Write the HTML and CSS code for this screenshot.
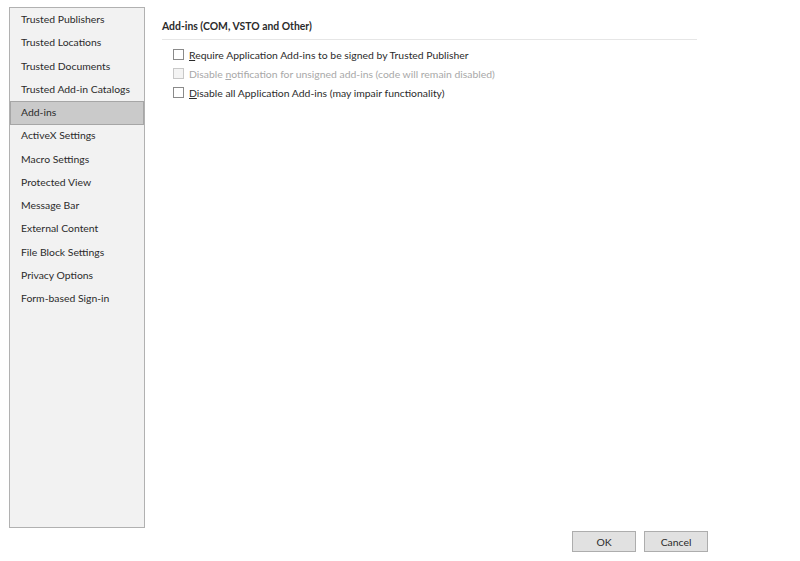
FILE: index.html
```html
<!DOCTYPE html>
<html>
<head>
<meta charset="utf-8">
<link rel="stylesheet" href="styles.css">
</head>
<body>
<div class="dialog">
  <div class="body">
    <ul class="nav">
      <li class="nav-item">Trusted Publishers</li>
      <li class="nav-item">Trusted Locations</li>
      <li class="nav-item">Trusted Documents</li>
      <li class="nav-item">Trusted Add-in Catalogs</li>
      <li class="nav-item selected">Add-ins</li>
      <li class="nav-item">ActiveX Settings</li>
      <li class="nav-item">Macro Settings</li>
      <li class="nav-item">Protected View</li>
      <li class="nav-item">Message Bar</li>
      <li class="nav-item">External Content</li>
      <li class="nav-item">File Block Settings</li>
      <li class="nav-item">Privacy Options</li>
      <li class="nav-item">Form-based Sign-in</li>
    </ul>
    <div class="content">
      <div class="section-title">Add-ins (COM, VSTO and Other)</div>
      <div class="separator"></div>
      <div class="options">
        <label class="option"><span class="box"></span><span><u>R</u>equire Application Add-ins to be signed by Trusted Publisher</span></label>
        <label class="option disabled"><span class="box"></span><span>Disable <u>n</u>otification for unsigned add-ins (code will remain disabled)</span></label>
        <label class="option"><span class="box"></span><span><u>D</u>isable all Application Add-ins (may impair functionality)</span></label>
      </div>
    </div>
  </div>
  <div class="footer">
    <button class="btn">OK</button>
    <button class="btn">Cancel</button>
  </div>
</div>
</body>
</html>
```

FILE: styles.css
```css
html, body {
  margin: 0;
  padding: 0;
  background: #ffffff;
}
body {
  font-family: "Lato", "Open Sans", sans-serif;
  font-size: 10.4px;
  color: #2b2b2b;
}
.dialog {
  display: flex;
  flex-direction: column;
  width: 800px;
  height: 561px;
}
.body {
  display: flex;
  margin-top: 7px;
  height: 521px;
}
.nav {
  list-style: none;
  margin: 0 0 0 9px;
  padding: 0;
  width: 134px;
  background: #f2f2f2;
  border: 1px solid #b1b1b1;
  box-sizing: content-box;
  height: 519px;
}
.nav-item {
  height: 23.25px;
  line-height: 23px;
  padding-left: 11px;
  box-sizing: border-box;
  white-space: nowrap;
}
.nav-item.selected {
  background: #cacaca;
  border: 1px solid #a6a6a6;
  padding-left: 10px;
  line-height: 21px;
  height: 24px;
  margin-bottom: -0.75px;
}
.content {
  display: flex;
  flex-direction: column;
  margin-left: 17px;
  width: 535px;
}
.section-title {
  font-weight: bold;
  margin-top: 11px;
  height: 18px;
  line-height: 16px;
}
.separator {
  height: 1px;
  background: #e6e6e6;
  margin-top: 3px;
}
.options {
  display: flex;
  flex-direction: column;
  margin-top: 5px;
  padding-left: 11px;
}
.option {
  display: flex;
  align-items: center;
  gap: 5px;
  height: 19px;
  white-space: nowrap;
}
.option u {
  text-decoration: underline;
  text-underline-offset: 1px;
}
.box {
  width: 11px;
  height: 11px;
  border: 1px solid #8a8a8a;
  background: #ffffff;
  box-sizing: border-box;
  flex: none;
}
.option.disabled {
  color: #a8a8a8;
}
.option.disabled .box {
  border-color: #c8c8c8;
  background: #f4f4f4;
}
.footer {
  display: flex;
  justify-content: flex-end;
  gap: 8px;
  padding-right: 92px;
  margin-top: 3px;
}
.btn {
  width: 64px;
  height: 21px;
  background: #e1e1e1;
  border: 1px solid #adadad;
  font-family: "Lato", "Open Sans", sans-serif;
  font-size: 10.4px;
  color: #2b2b2b;
  padding: 0;
}
```
